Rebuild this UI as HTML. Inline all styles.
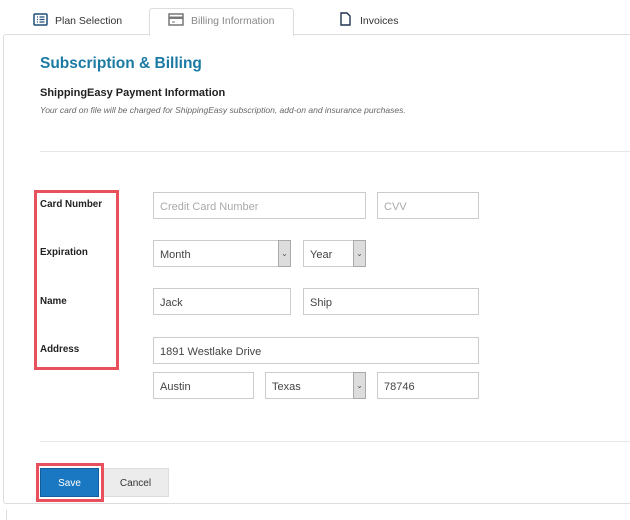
<!DOCTYPE html>
<html><head><style>
*{box-sizing:border-box;margin:0;padding:0}
body{width:630px;height:520px;background:#fff;font-family:"Liberation Sans",Arial,sans-serif;position:relative;overflow:hidden;color:#222}
.a{position:absolute}
.panel{left:3px;top:34px;width:640px;height:470px;border:1px solid #ddd;border-radius:3px}
.tab{left:149px;top:8px;width:145px;height:28px;border:1px solid #ddd;border-bottom:none;background:#fff;border-radius:3px 3px 0 0}
.tt{font-size:10.5px;color:#333;top:15px}
.lbl{font-size:9.8px;font-weight:bold;color:#222;left:40px}
.in{border:1px solid #ccc;height:27px;font-size:11px;color:#444;padding:8px 0 0 6px;background:#fff}
.ph{color:#aaa}
.arr{position:absolute;right:-1px;top:-1px;width:13px;height:27px;background:#ddd;border:1px solid #aaa;font-size:8px;color:#555;text-align:center;padding-top:8px}
.hr{height:1px;background:#e6e6e6;left:40px;width:600px}
</style></head><body>
<div class="a panel"></div>
<div class="a tab"></div>
<svg class="a" style="left:33px;top:13px" width="15" height="13" viewBox="0 0 15 13"><rect x="1" y="1" width="13" height="11" rx="1" fill="none" stroke="#1f4e79" stroke-width="1.5"/><path d="M4 4h1M4 6.5h1M4 9h1M6.5 4h5M6.5 6.5h5M6.5 9h5" stroke="#1f4e79" stroke-width="1.2"/></svg>
<div class="a tt" style="left:55px">Plan Selection</div>
<svg class="a" style="left:168px;top:13px" width="16" height="13" viewBox="0 0 16 13"><rect x="1" y="1" width="14" height="11" fill="none" stroke="#777" stroke-width="1.5"/><rect x="1" y="3.5" width="14" height="2.5" fill="#777"/><path d="M4 9h3" stroke="#777"/></svg>
<div class="a tt" style="left:191px;color:#888">Billing Information</div>
<svg class="a" style="left:340px;top:12px" width="11" height="14" viewBox="0 0 11 14"><path d="M1 1h6l3 3v9H1z" fill="none" stroke="#1f3550" stroke-width="1.4"/></svg>
<div class="a tt" style="left:360px">Invoices</div>
<div class="a" style="left:40px;top:55px;font-size:15.5px;font-weight:bold;color:#1b7aa3">Subscription &amp; Billing</div>
<div class="a" style="left:40px;top:87px;font-size:11px;font-weight:bold;color:#222">ShippingEasy Payment Information</div>
<div class="a" style="left:40px;top:105px;font-size:8.5px;font-style:italic;color:#666">Your card on file will be charged for ShippingEasy subscription, add-on and insurance purchases.</div>
<div class="a hr" style="top:151px"></div>
<div class="a" style="left:34px;top:190px;width:85px;height:180px;border:3px solid #e8505b"></div>
<div class="a lbl" style="top:199px">Card Number</div>
<div class="a lbl" style="top:247px">Expiration</div>
<div class="a lbl" style="top:296px">Name</div>
<div class="a lbl" style="top:344px">Address</div>
<div class="a in ph" style="left:153px;top:192px;width:213px">Credit Card Number</div>
<div class="a in ph" style="left:377px;top:192px;width:102px">CVV</div>
<div class="a in" style="left:153px;top:240px;width:138px">Month<div class="arr">&#8964;</div></div>
<div class="a in" style="left:303px;top:240px;width:63px">Year<div class="arr">&#8964;</div></div>
<div class="a in" style="left:153px;top:288px;width:138px">Jack</div>
<div class="a in" style="left:303px;top:288px;width:176px">Ship</div>
<div class="a in" style="left:153px;top:337px;width:326px">1891 Westlake Drive</div>
<div class="a in" style="left:153px;top:372px;width:101px">Austin</div>
<div class="a in" style="left:265px;top:372px;width:101px">Texas<div class="arr">&#8964;</div></div>
<div class="a in" style="left:377px;top:372px;width:102px">78746</div>
<div class="a hr" style="top:441px"></div>
<div class="a" style="left:102px;top:468px;width:67px;height:29px;background:#ececec;border:1px solid #ddd;font-size:10px;color:#333;text-align:center;padding-top:9px">Cancel</div>
<div class="a" style="left:36px;top:463px;width:68px;height:39px;border:3px solid #e8505b"></div>
<div class="a" style="left:40px;top:468px;width:59px;height:29px;background:#1a78c2;border:1px solid #135f9c;font-size:10px;color:#fff;text-align:center;padding-top:9px">Save</div>
<div class="a" style="left:6px;top:510px;width:1px;height:10px;background:#ddd"></div>
</body></html>
